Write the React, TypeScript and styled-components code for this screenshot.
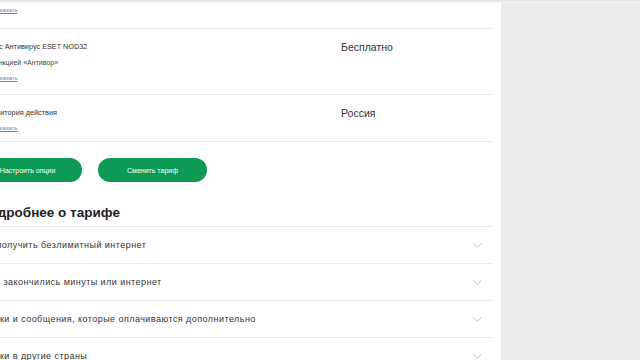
import React from 'react';
import styled, { createGlobalStyle } from 'styled-components';

const GlobalStyle = createGlobalStyle`
  html, body {
    margin: 0;
    padding: 0;
    background: #ebebeb;
    overflow: hidden;
  }
  body {
    font-family: 'Liberation Sans', Arial, sans-serif;
    color: #333;
  }
`;

const Page = styled.div`
  width: 640px;
  height: 360px;
  overflow: hidden;
  display: flex;
  flex-direction: column;
`;

const TopShade = styled.div`
  height: 3px;
  flex: none;
  background: linear-gradient(#e2e2e2, #f4f4f4);
`;

const Layout = styled.div`
  display: flex;
  flex: 1;
`;

const Column = styled.main`
  width: 528px;
  margin-left: -27px;
  background: #fff;
  padding-right: 9px;
  box-sizing: border-box;
`;

const Row = styled.div<{ $bottom: number; $top: number }>`
  display: grid;
  grid-template-columns: 368px 1fr;
  padding: ${(p) => p.$top}px 0 ${(p) => p.$bottom}px;
  border-bottom: 1px solid #ececec;
`;

const Info = styled.div`
  display: flex;
  flex-direction: column;
  align-items: flex-start;
  padding-left: 11px;
`;

const Title = styled.div`
  font-size: 7.3px;
  line-height: 16px;
  color: #333;
`;

const Note = styled.div`
  font-size: 7px;
  line-height: 16px;
  color: #444;
`;

const Link = styled.a`
  margin-left: 8px;
  font-size: 6px;
  line-height: 14px;
  color: #3a96dc;
  text-decoration: underline;
  cursor: pointer;
`;

const Value = styled.div`
  font-size: 10.5px;
  line-height: 16px;
  color: #333;
`;

const Actions = styled.div`
  display: flex;
  gap: 16px;
  margin-top: 16px;
`;

const Button = styled.button`
  width: 109px;
  height: 24px;
  border: none;
  border-radius: 12px;
  background: #0c9a55;
  color: #fff;
  font-family: 'Liberation Sans', Arial, sans-serif;
  font-size: 7px;
  padding: 0;
  cursor: pointer;
`;

const Heading = styled.h2`
  margin: 22px 0 4px;
  padding-left: 7px;
  font-size: 13.5px;
  line-height: 18px;
  font-weight: 700;
  color: #222;
`;

const Accordion = styled.div`
  border-top: 1px solid #ececec;
`;

const Item = styled.div`
  height: 36px;
  display: flex;
  align-items: center;
  justify-content: space-between;
  padding: 0 10px 0 5px;
  border-bottom: 1px solid #ececec;
`;

const ItemText = styled.span`
  font-size: 9px;
  letter-spacing: 0.45px;
  color: #333;
`;

const Chevron = () => (
  <svg width="9" height="5" viewBox="0 0 9 5" fill="none">
    <path d="M0.5 0.5 L4.5 4.3 L8.5 0.5" stroke="#b5b5b5" strokeWidth="0.9" />
  </svg>
);

const Aside = styled.aside`
  flex: 1;
  background: #ebebeb;
`;

const faq = [
  'Как получить безлимитный интернет',
  'Если закончились минуты или интернет',
  'Звонки и сообщения, которые оплачиваются дополнительно',
  'Звонки в другие страны',
];

export default function App() {
  return (
    <Page>
      <GlobalStyle />
      <TopShade />
      <Layout>
        <Column>
          <Row $top={0} $bottom={11}>
            <Info>
              <Link>Показать</Link>
            </Info>
          </Row>
          <Row $top={10} $bottom={9}>
            <Info>
              <Title>Плюс Антивирус ESET NOD32</Title>
              <Note>с функцией «Антивор»</Note>
              <Link>Показать</Link>
            </Info>
            <Value>Бесплатно</Value>
          </Row>
          <Row $top={10} $bottom={6}>
            <Info>
              <Title>Территория действия</Title>
              <Link>Показать</Link>
            </Info>
            <Value>Россия</Value>
          </Row>
          <Actions>
            <Button>Настроить опции</Button>
            <Button>Сменить тариф</Button>
          </Actions>
          <Heading>Подробнее о тарифе</Heading>
          <Accordion>
            {faq.map((q) => (
              <Item key={q}>
                <ItemText>{q}</ItemText>
                <Chevron />
              </Item>
            ))}
          </Accordion>
        </Column>
        <Aside />
      </Layout>
    </Page>
  );
}
